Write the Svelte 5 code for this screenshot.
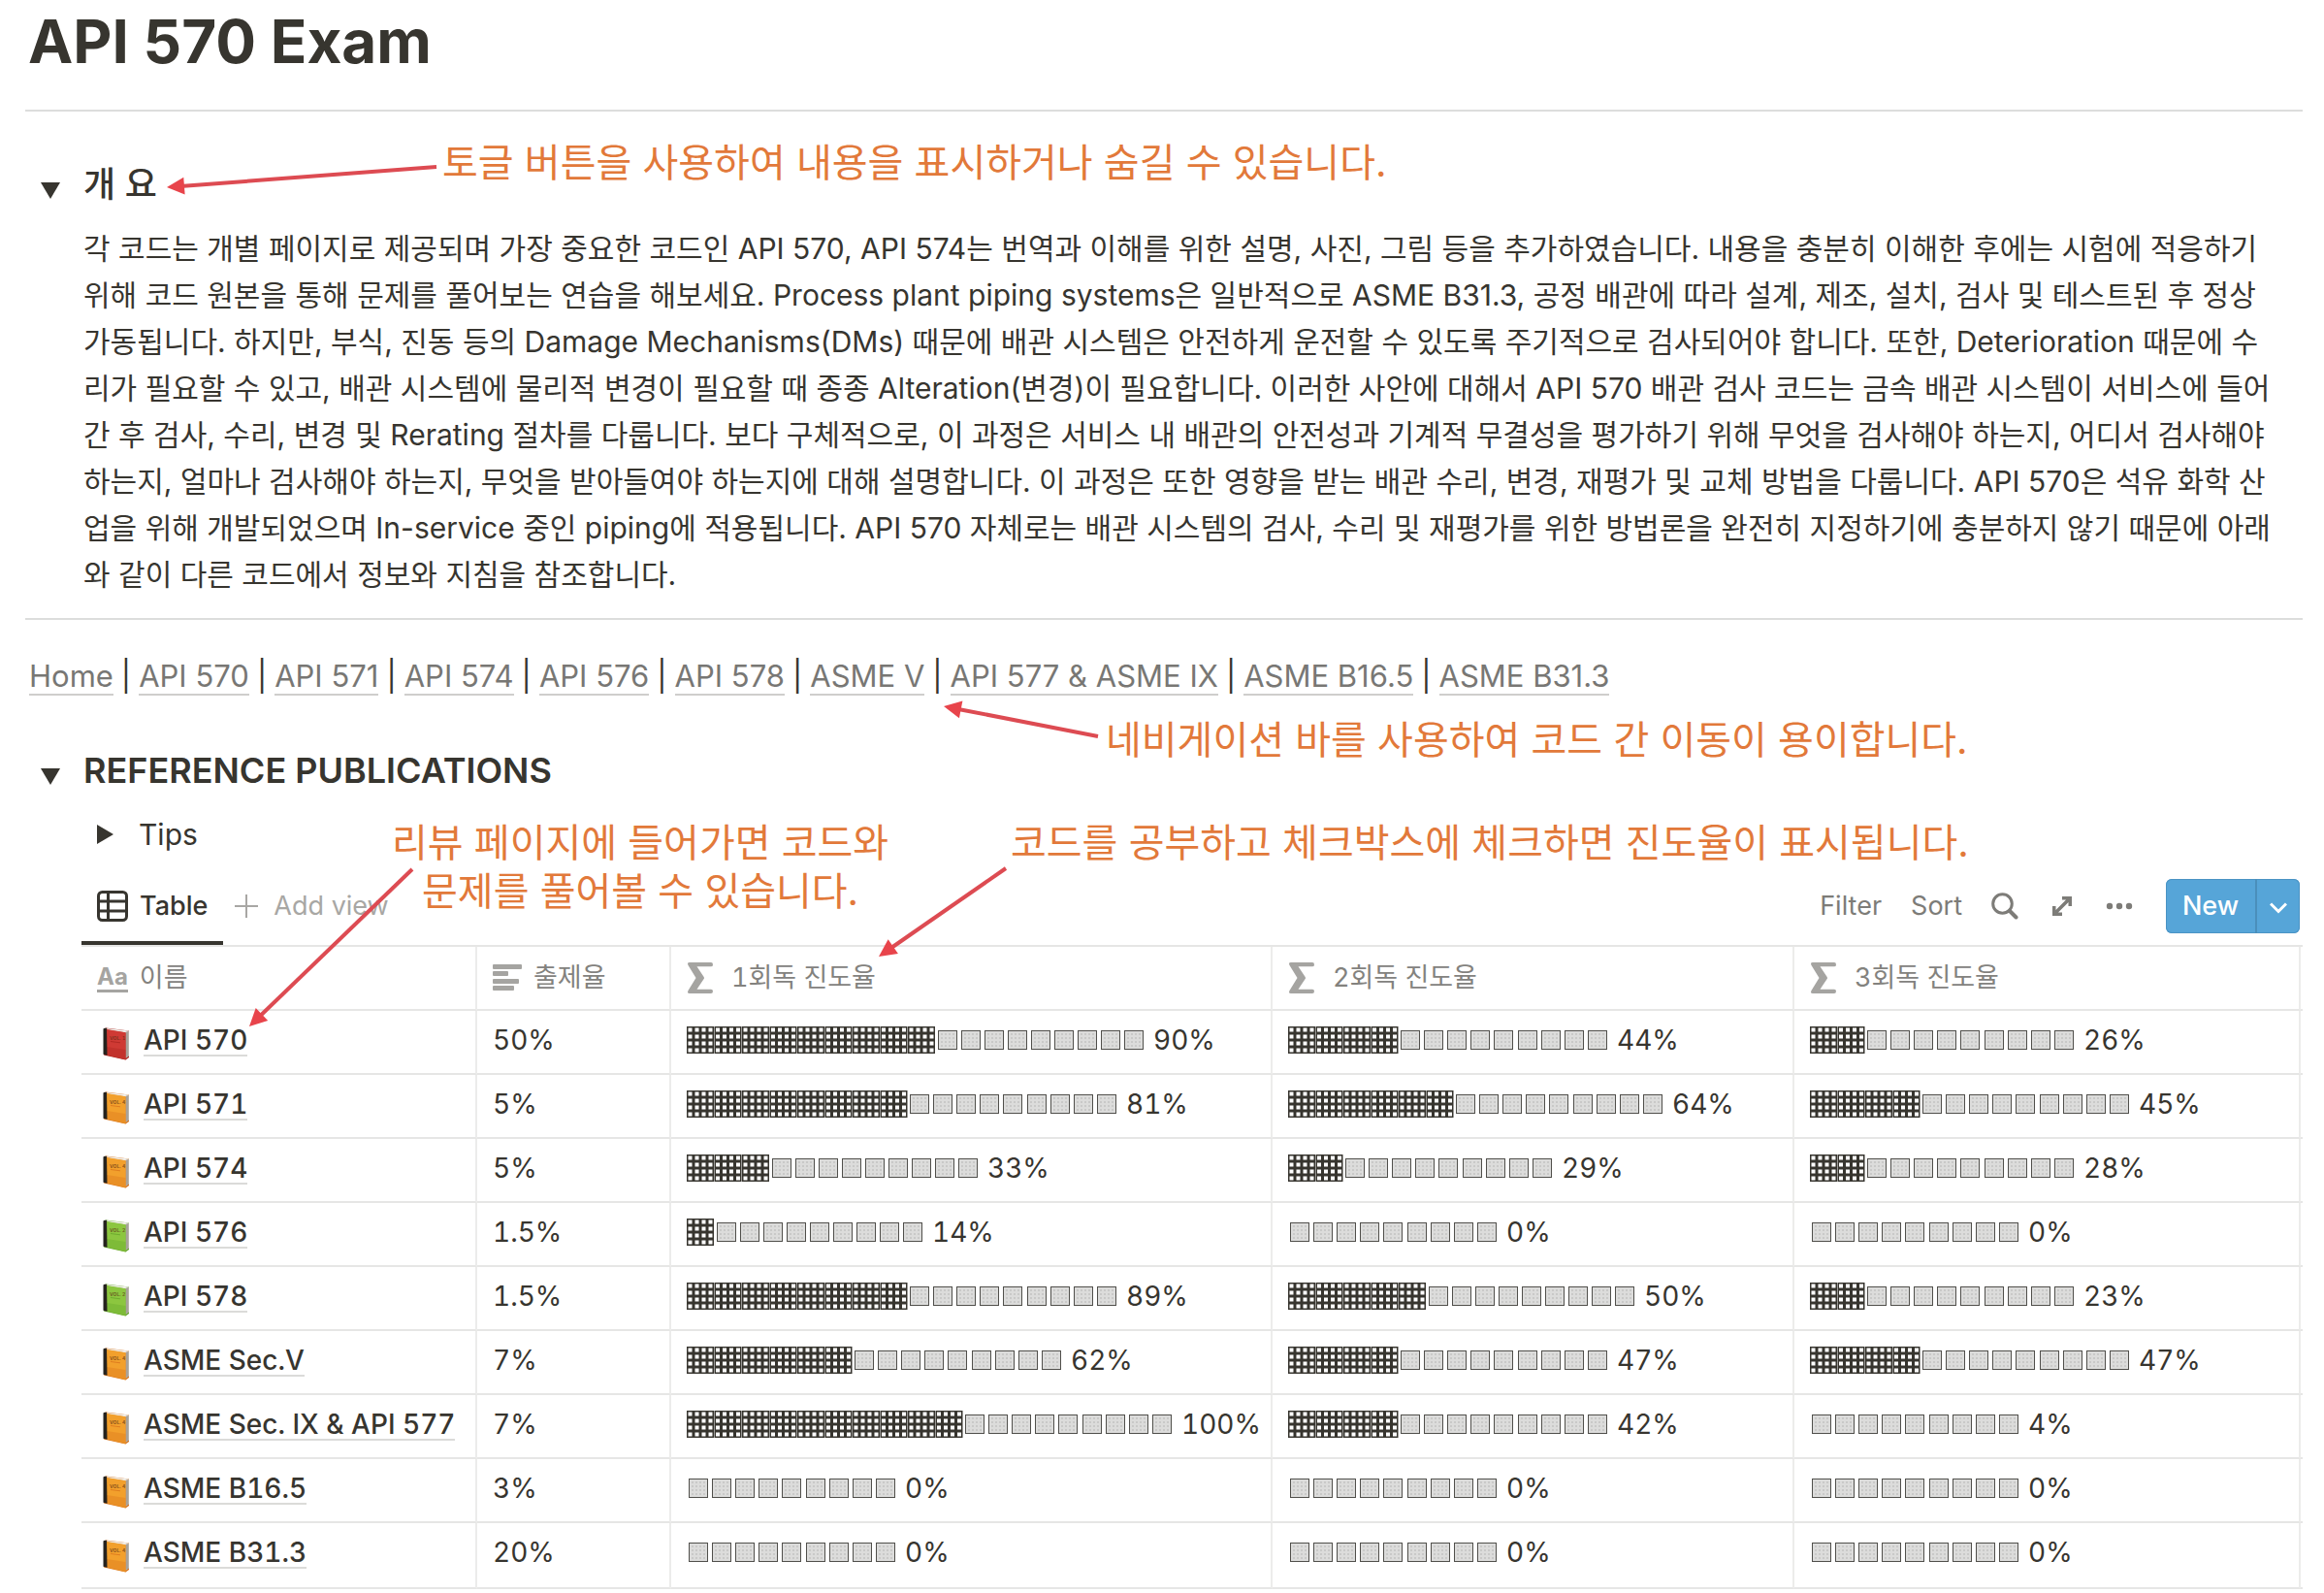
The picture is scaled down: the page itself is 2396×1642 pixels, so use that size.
<script>
  const links = [
    'Home', 'API 570', 'API 571', 'API 574', 'API 576', 'API 578',
    'ASME V', 'API 577 & ASME IX', 'ASME B16.5', 'ASME B31.3',
  ];

  const books = {
    red: { cover: '#cf3a34', dark: '#a9241f', vol: 'VOL. 1' },
    orange: { cover: '#f2a02c', dark: '#d9741c', vol: 'VOL. 4' },
    green: { cover: '#8cc63f', dark: '#64a52a', vol: 'VOL. 2' },
  };

  const rows = [
    { name: 'API 570', book: 'red', weight: '50%', progress: [90, 44, 26] },
    { name: 'API 571', book: 'orange', weight: '5%', progress: [81, 64, 45] },
    { name: 'API 574', book: 'orange', weight: '5%', progress: [33, 29, 28] },
    { name: 'API 576', book: 'green', weight: '1.5%', progress: [14, 0, 0] },
    { name: 'API 578', book: 'green', weight: '1.5%', progress: [89, 50, 23] },
    { name: 'ASME Sec.V', book: 'orange', weight: '7%', progress: [62, 47, 47] },
    { name: 'ASME Sec. IX & API 577', book: 'orange', weight: '7%', progress: [100, 42, 4] },
    { name: 'ASME B16.5', book: 'orange', weight: '3%', progress: [0, 0, 0] },
    { name: 'ASME B31.3', book: 'orange', weight: '20%', progress: [0, 0, 0] },
  ];

  // tail and tip of every arrow
  const arrows = [
    { x1: 450, y1: 172, x2: 172, y2: 193 },
    { x1: 1132, y1: 759, x2: 973, y2: 728 },
    { x1: 1037, y1: 895, x2: 906, y2: 986 },
    { x1: 425, y1: 896, x2: 257, y2: 1058 },
  ];

  const FULL = 28.5;
  const EMPTY = 24.1;
  const EMPTY_COUNT = 9;

  let overviewOpen = $state(true);
  let referencesOpen = $state(true);
  let tipsOpen = $state(false);

  function filled(value) {
    return Math.floor(value / 10);
  }
</script>

{#snippet bar(value)}
  {@const n = filled(value)}
  {@const width = Math.round(n * FULL + EMPTY_COUNT * EMPTY)}
  <span class="progress">
    <svg class="bar" {width} height="28" viewBox="0 0 {width} 28" aria-hidden="true">
      {#each Array(n) as _, i}
        <rect x={i * FULL} y="0" width="28" height="28" fill="#37352f" />
        {#each [0, 1, 2, 3] as r}
          {#each [0, 1, 2, 3] as c}
            <rect x={i * FULL + 1.5 + c * 7} y={1.5 + r * 7} width="4" height="4" fill="#fff" />
          {/each}
        {/each}
      {/each}
      {#each Array(EMPTY_COUNT) as _, i}
        {@const x = Math.round(n * FULL + i * EMPTY + 2)}
        <rect x={x + 0.5} y="4.5" width="19" height="19" fill="#c9c9c8" stroke="#504f4b" />
        <path
          d="M{x + 2} 5v18M{x + 6} 5v18M{x + 10} 5v18M{x + 14} 5v18M{x + 18} 5v18M{x + 1} 6h18M{x + 1} 10h18M{x + 1} 14h18M{x + 1} 18h18M{x + 1} 22h18"
          stroke="#efefee"
          stroke-width="2"
          stroke-opacity="0.5"
        />
      {/each}
    </svg>
    <span>{value}%</span>
  </span>
{/snippet}

{#snippet sigma()}
  <svg class="head-icon" width="28" height="34" viewBox="0 0 28 38" preserveAspectRatio="none" aria-hidden="true">
    <path
      d="M3 1H25Q27 1 27 3.500T25 6H10.500L17.500 17.500Q18.500 19 17.500 20.500L10.500 32H25Q27 32 27 34.500T25 37H3Q0 37 1.500 33.500L9.500 19L1.500 4.500Q0 1 3 1Z"
      fill="#a5a4a1"
    />
  </svg>
{/snippet}

{#snippet book(kind)}
  {@const b = books[kind]}
  <svg class="book" width="28" height="34" viewBox="0 0 28 34" aria-hidden="true">
    <path d="M3 0.500L27 3.500V31L23.500 33.500L1 28.500V2Z" fill={b.dark} />
    <path d="M4 1L27 3.600L24.500 5.500L5 2.500Z" fill="#efede8" />
    <path d="M23.500 5L27 3.800V29.500L23.500 32Z" fill="#b9b4ac" />
    <path d="M25 4.600V30.500" stroke="#8d8881" stroke-width="0.800" />
    <path d="M4 2L23.500 5.200V33.300L4 28.500Z" fill={b.cover} />
    <path d="M4 20L23.500 23V33.300L4 28.500Z" fill={b.dark} opacity="0.350" />
    <path d="M0.500 1.500Q1 0.300 4 0.800L4.500 28.800L0.500 27.800Z" fill="#25221e" />
    <path d="M8 14.500L18 15.800" stroke={b.dark} stroke-width="0.800" />
    <text x="7" y="13" font-size="5" font-weight="700" fill="#5b2f14" fill-opacity="0.700">{b.vol}</text>
  </svg>
{/snippet}

<main>
  <h1>API 570 Exam</h1>
  <hr />

  <section class="overview">
    <h2>
      <button class="toggle" aria-expanded={overviewOpen} onclick={() => (overviewOpen = !overviewOpen)}>
        <svg class="caret" class:closed={!overviewOpen} width="20" height="17" viewBox="0 0 20 17" aria-hidden="true">
          <path d="M0 0H20L10 17Z" fill="#37352f" />
        </svg>
        <span>개 요</span>
      </button>
    </h2>
    {#if overviewOpen}
      <p>
        각 코드는 개별 페이지로 제공되며 가장 중요한 코드인 API 570, API 574는 번역과 이해를 위한 설명, 사진, 그림 등을 추가하였습니다. 내용을 충분히 이해한 후에는 시험에 적응하기
        위해 코드 원본을 통해 문제를 풀어보는 연습을 해보세요. Process plant piping systems은 일반적으로 ASME B31.3, 공정 배관에 따라 설계, 제조, 설치, 검사 및 테스트된 후 정상
        가동됩니다. 하지만, 부식, 진동 등의 Damage Mechanisms(DMs) 때문에 배관 시스템은 안전하게 운전할 수 있도록 주기적으로 검사되어야 합니다. 또한, Deterioration 때문에 수리가
        필요할 수 있고, 배관 시스템에 물리적 변경이 필요할 때 종종 Alteration(변경)이 필요합니다. 이러한 사안에 대해서 API 570 배관 검사 코드는 금속 배관 시스템이 서비스에 들어간
        후 검사, 수리, 변경 및 Rerating 절차를 다룹니다. 보다 구체적으로, 이 과정은 서비스 내 배관의 안전성과 기계적 무결성을 평가하기 위해 무엇을 검사해야 하는지, 어디서 검사해야
        하는지, 얼마나 검사해야 하는지, 무엇을 받아들여야 하는지에 대해 설명합니다. 이 과정은 또한 영향을 받는 배관 수리, 변경, 재평가 및 교체 방법을 다룹니다. API 570은 석유 화학 산업을
        위해 개발되었으며 In-service 중인 piping에 적용됩니다. API 570 자체로는 배관 시스템의 검사, 수리 및 재평가를 위한 방법론을 완전히 지정하기에 충분하지 않기 때문에 아래와
        같이 다른 코드에서 정보와 지침을 참조합니다.
      </p>
    {/if}
  </section>
  <hr />

  <nav>
    {#each links as link, i}
      {#if i > 0}<span>|</span>{/if}
      <a href="#{link}">{link}</a>
    {/each}
  </nav>

  <section class="references">
    <h2>
      <button class="toggle" aria-expanded={referencesOpen} onclick={() => (referencesOpen = !referencesOpen)}>
        <svg class="caret" class:closed={!referencesOpen} width="20" height="17" viewBox="0 0 20 17" aria-hidden="true">
          <path d="M0 0H20L10 17Z" fill="#37352f" />
        </svg>
        <span>REFERENCE PUBLICATIONS</span>
      </button>
    </h2>

    {#if referencesOpen}
      <div class="content">
        <button class="tips" aria-expanded={tipsOpen} onclick={() => (tipsOpen = !tipsOpen)}>
          <svg width="17" height="20" viewBox="0 0 17 20" aria-hidden="true">
            <path d="M0 0V20L17 10Z" fill="#37352f" />
          </svg>
          <span>Tips</span>
        </button>

        <div class="toolbar">
          <button class="tab">
            <svg width="32" height="32" viewBox="0 0 32 32" fill="none" stroke="#37352f" stroke-width="3" aria-hidden="true">
              <rect x="1.500" y="1.500" width="29" height="29" rx="4" />
              <path d="M1.500 11H30.500M1.500 21H30.500M11.500 1.500V30.500" />
            </svg>
            Table
          </button>
          <button class="add">
            <svg width="24" height="24" viewBox="0 0 24 24" stroke="#a8a7a4" stroke-width="2" aria-hidden="true">
              <path d="M12 0V24M0 12H24" />
            </svg>
            Add view
          </button>
          <div class="tools">
            <button>Filter</button>
            <button>Sort</button>
            <button aria-label="Search">
              <svg width="28" height="28" viewBox="0 0 28 28" fill="none" stroke="#7d7c78" aria-hidden="true">
                <circle cx="11.500" cy="11.500" r="9.800" stroke-width="3" />
                <path d="M19 19L25.500 25.500" stroke-width="4" stroke-linecap="round" />
              </svg>
            </button>
            <button class="expand" aria-label="Open as full page">
              <svg width="20" height="20" viewBox="0 0 20 20" fill="#7d7c78" aria-hidden="true">
                <path d="M10 0H20V10H16.500V6L6 16.500H10V20H0V10H3.500V14L14 3.500H10Z" />
              </svg>
            </button>
            <button aria-label="More">
              <svg width="28" height="8" viewBox="0 0 28 8" fill="#7d7c78" aria-hidden="true">
                <circle cx="4" cy="4" r="3.200" />
                <circle cx="14" cy="4" r="3.200" />
                <circle cx="24" cy="4" r="3.200" />
              </svg>
            </button>
          </div>
          <div class="new">
            <button>New</button>
            <button class="more" aria-label="Templates">
              <svg width="18" height="12" viewBox="0 0 18 12" fill="none" stroke="#fff" stroke-width="3" aria-hidden="true">
                <path d="M1 1.500L9 9.500L17 1.500" />
              </svg>
            </button>
          </div>
        </div>

        <table>
          <colgroup>
            <col class="c-name" />
            <col class="c-weight" />
            <col class="c-first" />
            <col class="c-second" />
            <col />
            <col class="c-end" />
          </colgroup>
          <thead>
            <tr>
              <th><span class="head"><span class="aa">Aa</span>이름</span></th>
              <th>
                <span class="head">
                  <svg class="lines" width="30" height="28" viewBox="0 0 30 28" fill="#a5a4a1" aria-hidden="true">
                    <rect width="30" height="5" rx="1" />
                    <rect y="7" width="16" height="5" rx="1" />
                    <rect y="15" width="27" height="5" rx="1" />
                    <rect y="22" width="22" height="5" rx="1" />
                  </svg>
                  출제율
                </span>
              </th>
              {#each [1, 2, 3] as round}
                <th><span class="head wide">{@render sigma()}{round}회독 진도율</span></th>
              {/each}
              <td></td>
            </tr>
          </thead>
          <tbody>
            {#each rows as row}
              <tr>
                <td>
                  <span class="title">
                    {@render book(row.book)}
                    <a href="#{row.name}">{row.name}</a>
                  </span>
                </td>
                <td>{row.weight}</td>
                {#each row.progress as value}
                  <td>{@render bar(value)}</td>
                {/each}
                <td></td>
              </tr>
            {/each}
          </tbody>
        </table>
      </div>
    {/if}
  </section>

  <div class="note n1">토글 버튼을 사용하여 내용을 표시하거나 숨길 수 있습니다.</div>
  <div class="note n2">네비게이션 바를 사용하여 코드 간 이동이 용이합니다.</div>
  <div class="note n3">리뷰 페이지에 들어가면 코드와<br />문제를 풀어볼 수 있습니다.</div>
  <div class="note n4">코드를 공부하고 체크박스에 체크하면 진도율이 표시됩니다.</div>

  <svg class="arrows" aria-hidden="true">
    {#each arrows as { x1, y1, x2, y2 }}
      {@const angle = (Math.atan2(y2 - y1, x2 - x1) * 180) / Math.PI}
      {@const length = Math.hypot(x2 - x1, y2 - y1)}
      <g transform="translate({x2} {y2}) rotate({angle})">
        <path d="M{-length} 0H-14" stroke="#dd4b52" stroke-width="4" />
        <path d="M0 0L-18 -9V9Z" fill="#e8444b" />
      </g>
    {/each}
  </svg>
</main>

<style>
  :global(body) {
    margin: 0;
    background: #fff;
  }

  main {
    position: relative;
    padding: 0 22px 4px 26px;
    color: #37352f;
    font-family: Inter, "Noto Sans CJK KR", sans-serif;
    font-size: 30px;
    line-height: 48px;
  }

  button {
    padding: 0;
    border: 0;
    background: none;
    color: inherit;
    font: inherit;
    cursor: pointer;
  }

  a {
    color: inherit;
    text-decoration: none;
  }

  svg {
    flex: none;
  }

  h1 {
    margin: 0;
    padding: 3px;
    font-size: 62px;
    font-weight: 700;
    line-height: 80px;
  }

  hr {
    height: 2px;
    margin: 0;
    border: 0;
    background: #dcdddc;
  }

  h1 + hr {
    margin-top: 27px;
  }

  h2 {
    margin: 0;
    font-size: 36px;
    font-weight: 600;
    line-height: 48px;
  }

  .overview h2 {
    font-weight: 500;
  }

  .toggle {
    display: flex;
    align-items: center;
    gap: 24px;
    padding-left: 16px;
  }

  .caret {
    margin-top: 12px;
  }

  .closed {
    transform: rotate(-90deg);
  }

  .overview {
    padding: 51px 0 21px;
  }

  .overview p {
    margin: 0;
    padding: 18px 22px 0 60px;
  }

  nav {
    display: flex;
    gap: 8px;
    padding: 34px 4px 0;
    font-size: 31px;
  }

  nav a {
    height: 42px;
    border-bottom: 2px solid #cfcecc;
    color: #787774;
  }

  .references h2 {
    padding-top: 49px;
  }

  .content {
    padding-left: 58px;
  }

  .tips {
    display: flex;
    align-items: center;
    gap: 26px;
    padding: 18px 0 0 16px;
  }

  .toolbar {
    display: flex;
    align-items: center;
    height: 72px;
    margin-top: 14px;
    padding-bottom: 4px;
    border-bottom: 2px solid #e6e6e5;
    font-size: 27px;
  }

  .tab {
    display: flex;
    align-items: center;
    gap: 12px;
    height: 76px;
    margin-bottom: -4px;
    padding: 0 16px;
    border-bottom: 4px solid #37352f;
    font-weight: 500;
  }

  .add {
    display: flex;
    align-items: center;
    gap: 16px;
    margin-left: 12px;
    color: #a8a7a4;
  }

  .tools {
    display: flex;
    align-items: center;
    gap: 30px;
    margin-left: auto;
    color: #7d7c78;
  }

  .tools button {
    display: flex;
  }

  .tools .expand {
    padding: 0 5px;
  }

  .new {
    display: flex;
    height: 56px;
    margin: 0 3px 0 34px;
    border-radius: 6px;
    background: #56a5d8;
    box-shadow: inset 0 0 0 1px #4a93c4;
    color: #fff;
    font-weight: 500;
  }

  .new button {
    width: 92px;
  }

  .new .more {
    display: flex;
    align-items: center;
    justify-content: center;
    width: 46px;
    padding-top: 4px;
    border-left: 2px solid #4a8fbb;
  }

  table {
    width: 100%;
    border-collapse: separate;
    border-spacing: 0;
    table-layout: fixed;
    font-size: 28px;
    font-variant-numeric: tabular-nums;
  }

  .c-name { width: 408px; }
  .c-weight { width: 200px; }
  .c-first { width: 620px; }
  .c-second { width: 538px; }
  .c-end { width: 2px; }

  th,
  td {
    box-sizing: border-box;
    height: 66px;
    padding: 0 0 0 16px;
    border-right: 2px solid #ececeb;
    border-bottom: 2px solid #e6e6e5;
    text-align: left;
    font-weight: 400;
    white-space: nowrap;
  }

  td {
    padding-bottom: 4px;
  }

  tbody tr:last-child td {
    height: 68px;
    padding-bottom: 6px;
  }

  td:last-child {
    padding: 0;
    border-right: 0;
  }

  .head,
  .title,
  .progress {
    display: flex;
    align-items: center;
  }

  .head {
    gap: 12px;
    color: #83827e;
    font-size: 27px;
  }

  .wide {
    gap: 18px;
  }

  .aa {
    border-bottom: 3px solid #a5a4a1;
    color: #a5a4a1;
    font-size: 24px;
    font-weight: 700;
    line-height: 26px;
  }

  .title {
    gap: 14px;
    padding-left: 6px;
  }

  .title a {
    height: 32px;
    border-bottom: 2px solid #dbdbd9;
    font-weight: 500;
    line-height: 34px;
  }

  .book {
    margin-top: 8px;
  }

  .progress {
    gap: 8px;
  }

  .note {
    position: absolute;
    color: #e2793a;
    font-size: 40px;
    line-height: 50px;
    text-align: center;
    white-space: nowrap;
  }

  .n1 { top: 143px; left: 456px; }
  .n2 { top: 738px; left: 1140px; }
  .n3 { top: 844px; left: 404px; }
  .n4 { top: 844px; left: 1042px; }

  .arrows {
    position: absolute;
    top: 0;
    left: 0;
    width: 100%;
    height: 100%;
    pointer-events: none;
  }
</style>
